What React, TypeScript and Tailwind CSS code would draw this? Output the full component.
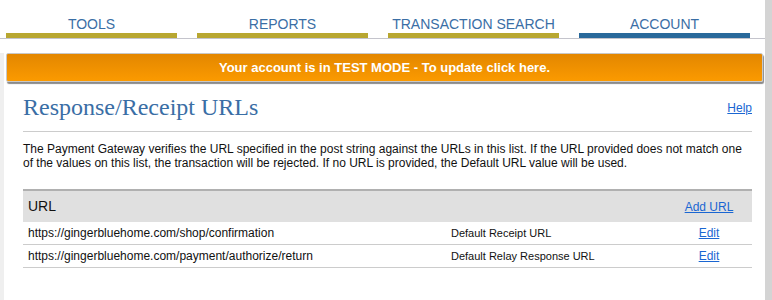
import React from 'react';

const tabs = [
  { label: 'TOOLS', active: false },
  { label: 'REPORTS', active: false },
  { label: 'TRANSACTION SEARCH', active: false },
  { label: 'ACCOUNT', active: true },
];

const rows = [
  { url: 'https://gingerbluehome.com/shop/confirmation', type: 'Default Receipt URL' },
  { url: 'https://gingerbluehome.com/payment/authorize/return', type: 'Default Relay Response URL' },
];

const App: React.FC = () => {
  return (
    <div className="w-[772px] h-[300px] bg-white overflow-hidden flex font-['Liberation_Sans',Arial,sans-serif]">
      <div className="w-[765px] flex flex-col">
        {/* Top nav */}
        <div className="pt-[15px] pl-[6px] flex gap-[20px] border-b border-[#c4c4cc]">
          {tabs.map((tab) => (
            <div key={tab.label} className="w-[171px] flex flex-col items-center">
              <span className="h-[18px] leading-[18px] text-[14px] whitespace-nowrap text-[#3a6ea5]">{tab.label}</span>
              <div className={`w-full h-[5px] ${tab.active ? 'bg-[#29699b]' : 'bg-[#b8a731]'}`} />
            </div>
          ))}
        </div>

        {/* Body */}
        <div className="mt-[14px] flex-1 border-l-4 border-[#efefef]">
          {/* Test mode banner */}
          <div className="ml-[2px] mr-[2px] h-[29px] border border-[#c8c8c8] rounded-[2px] bg-gradient-to-b from-[#e38700] to-[#fb9a00] shadow-[1px_2px_1px_#8a8a8a] flex items-center justify-center">
            <span className="text-white font-bold text-[13px]">Your account is in TEST MODE - To update click here.</span>
          </div>

          <div className="pl-[19px] pr-[13px]">
            {/* Heading */}
            <div className="mt-[11px] pb-[10px] border-b border-[#cccccc] flex items-end justify-between">
              <h1 className="font-['Liberation_Serif',serif] text-[24px] leading-[28px] text-[#3a6ea5]">
                Response/Receipt URLs
              </h1>
              <a href="#" className="mb-[4px] text-[12px] text-[#1a66d2] underline">Help</a>
            </div>

            <p className="mt-[10px] pr-[6px] text-[12px] leading-[14px] text-[#111]">
              The Payment Gateway verifies the URL specified in the post string against the URLs in this list. If the URL provided does not match one of the values on this list, the transaction will be rejected. If no URL is provided, the Default URL value will be used.
            </p>

            {/* URL table */}
            <div className="mt-[19px] border-t-2 border-[#b0b0b0]">
              <div className="h-[31px] bg-[#e0e0e0] grid grid-cols-[428px_215px_1fr] items-center">
                <span className="pl-[5px] text-[14px] text-[#111]">URL</span>
                <span />
                <a href="#" className="text-center text-[12px] text-[#1a66d2] underline">Add URL</a>
              </div>
              {rows.map((row) => (
                <div
                  key={row.url}
                  className="h-[23px] border-b border-[#cccccc] grid grid-cols-[428px_215px_1fr] items-center text-[12px] text-[#111]"
                >
                  <span className="pl-[5px]">{row.url}</span>
                  <span className="text-[11px]">{row.type}</span>
                  <a href="#" className="text-center text-[#1a66d2] underline">Edit</a>
                </div>
              ))}
            </div>
          </div>
        </div>
      </div>
      <div className="w-[7px] bg-[#d4d4d4]" />
    </div>
  );
};

export default App;
